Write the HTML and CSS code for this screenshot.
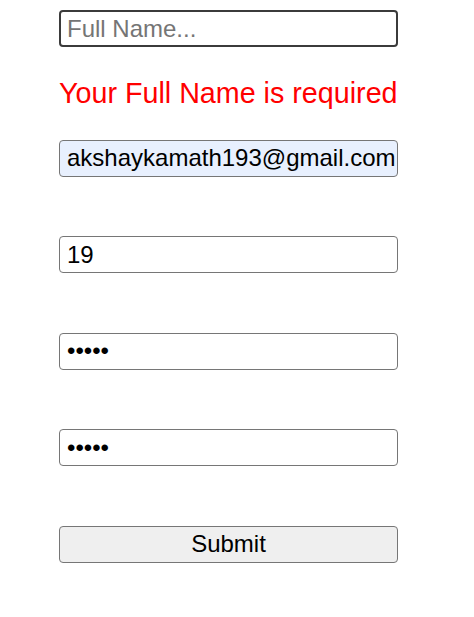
FILE: index.html
```html
<!DOCTYPE html>
<html lang="en">
<head>
    <meta charset="UTF-8">
    <title>Sign Up</title>
    <link rel="stylesheet" href="styles.css">
</head>
<body>
    <form class="signup-form">
        <input class="field invalid" type="text" name="fullname" placeholder="Full Name...">
        <p class="error">Your Full Name is required</p>
        <input class="field autofilled" type="email" name="email" value="akshaykamath193@gmail.com">
        <p class="error"></p>
        <input class="field" type="number" name="age" value="19">
        <p class="error"></p>
        <input class="field" type="password" name="password" value="12345">
        <p class="error"></p>
        <input class="field" type="password" name="confirmPassword" value="12345">
        <p class="error"></p>
        <button class="submit-button" type="submit">Submit</button>
    </form>
</body>
</html>
```

FILE: styles.css
```css
body {
    font-family: "Liberation Sans", Arial, sans-serif;
    background-color: #ffffff;
    margin: 0;
    padding: 10px 0 0 59px;
}
.signup-form {
    display: flex;
    flex-direction: column;
    gap: 29.75px;
    width: 339px;
}
.field {
    box-sizing: border-box;
    height: 37px;
    width: 100%;
    margin: 0;
    padding: 0 1px 0 7px;
    border: 1px solid #767676;
    border-radius: 4px;
    font-family: "Liberation Sans", Arial, sans-serif;
    font-size: 24px;
    color: #000;
    background-color: #ffffff;
    outline: none;
}
.field::placeholder {
    color: #757575;
}
.field.invalid {
    border: 2px solid #3b3b3b;
    padding: 0 1px 0 6px;
}
.field.autofilled {
    background-color: #e8f0fe;
}
.field::-webkit-outer-spin-button,
.field::-webkit-inner-spin-button {
    -webkit-appearance: none;
    margin: 0;
}
.error {
    margin: 0;
    color: #ff0000;
    font-size: 28.7px;
    line-height: 33px;
    white-space: nowrap;
}
.error:empty {
    display: block;
    height: 0;
}
.submit-button {
    box-sizing: border-box;
    height: 37px;
    width: 100%;
    border: 1px solid #767676;
    border-radius: 4px;
    background-color: #efefef;
    font-family: "Liberation Sans", Arial, sans-serif;
    font-size: 24px;
    color: #000;
    cursor: pointer;
}
```
